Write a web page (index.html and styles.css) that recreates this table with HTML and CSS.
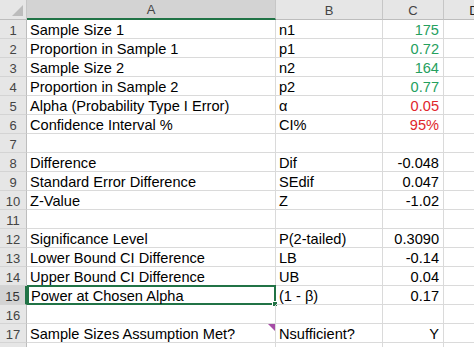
FILE: index.html
```html
<!DOCTYPE html>
<html>
<head>
<meta charset="utf-8">
<link rel="stylesheet" href="styles.css">
</head>
<body>
<div class="sheet">
  <div class="hd corner"><span class="tri"></span></div>
  <div class="hd col sel-col">A</div>
  <div class="hd col">B</div>
  <div class="hd col">C</div>
  <div class="hd col last">D</div>

  <div class="hd row">1</div><div class="c">Sample Size 1</div><div class="c">n1</div><div class="c num g">175</div><div class="c"></div>
  <div class="hd row">2</div><div class="c">Proportion in Sample 1</div><div class="c">p1</div><div class="c num g">0.72</div><div class="c"></div>
  <div class="hd row">3</div><div class="c">Sample Size 2</div><div class="c">n2</div><div class="c num g">164</div><div class="c"></div>
  <div class="hd row">4</div><div class="c">Proportion in Sample 2</div><div class="c">p2</div><div class="c num g">0.77</div><div class="c"></div>
  <div class="hd row">5</div><div class="c">Alpha (Probability Type I Error)</div><div class="c">α</div><div class="c num r">0.05</div><div class="c"></div>
  <div class="hd row">6</div><div class="c">Confidence Interval %</div><div class="c">CI%</div><div class="c num r">95%</div><div class="c"></div>
  <div class="hd row">7</div><div class="c"></div><div class="c"></div><div class="c"></div><div class="c"></div>
  <div class="hd row">8</div><div class="c">Difference</div><div class="c">Dif</div><div class="c num">-0.048</div><div class="c"></div>
  <div class="hd row">9</div><div class="c">Standard Error Difference</div><div class="c">SEdif</div><div class="c num">0.047</div><div class="c"></div>
  <div class="hd row">10</div><div class="c">Z-Value</div><div class="c">Z</div><div class="c num">-1.02</div><div class="c"></div>
  <div class="hd row">11</div><div class="c"></div><div class="c"></div><div class="c"></div><div class="c"></div>
  <div class="hd row">12</div><div class="c">Significance Level</div><div class="c">P(2-tailed)</div><div class="c num">0.3090</div><div class="c"></div>
  <div class="hd row">13</div><div class="c">Lower Bound CI Difference</div><div class="c">LB</div><div class="c num">-0.14</div><div class="c"></div>
  <div class="hd row">14</div><div class="c">Upper Bound CI Difference</div><div class="c">UB</div><div class="c num">0.04</div><div class="c"></div>
  <div class="hd row sel-row">15</div><div class="c active">Power at Chosen Alpha<span class="handle"></span></div><div class="c">(1 - β)</div><div class="c num">0.17</div><div class="c"></div>
  <div class="hd row">16</div><div class="c"></div><div class="c"></div><div class="c"></div><div class="c"></div>
  <div class="hd row">17</div><div class="c note">Sample Sizes Assumption Met?<span class="flag"></span></div><div class="c">Nsufficient?</div><div class="c num">Y</div><div class="c"></div>
  <div class="hd row"></div><div class="c"></div><div class="c"></div><div class="c"></div><div class="c"></div>
</div>
</body>
</html>
```
FILE: styles.css
```css
* { box-sizing: border-box; }
html, body { margin: 0; padding: 0; background: #fff; overflow: hidden; }
body { width: 474px; height: 347px; }

.sheet {
  display: grid;
  grid-template-columns: 27px 249px 107px 61px 60px;
  grid-template-rows: 20px repeat(18, 19px);
  font-family: "Liberation Sans", Arial, sans-serif;
}

.hd {
  background: #e6e6e6;
  color: #444;
  font-size: 13px;
  display: flex;
  align-items: center;
  justify-content: center;
}
.col {
  border-right: 1px solid #c6c6c6;
  border-bottom: 1px solid #bdbdbd;
  padding-top: 1px;
}
.col.last { border-right: none; color: #222; }
.sel-col {
  background: #d3d3d3;
  border-bottom: 2px solid #217346;
}
.corner {
  position: relative;
  border-right: 1px solid #c6c6c6;
  border-bottom: 1px solid #bdbdbd;
}
.tri {
  position: absolute;
  right: 3px;
  bottom: 3px;
  width: 0;
  height: 0;
  border-left: 11px solid transparent;
  border-bottom: 11px solid #bcbcbc;
}
.row {
  border-right: 1px solid #bdbdbd;
  border-bottom: 1px solid #d4d4d4;
  font-size: 13px;
  padding-top: 2px;
}
.sel-row {
  background: #d3d3d3;
  border-right: 2px solid #217346;
  color: #333;
}

.c {
  position: relative;
  border-right: 1px solid #dadada;
  border-bottom: 1px solid #dadada;
  font-size: 14.6px;
  color: #000;
  padding: 2px 4px 0 3px;
  display: flex;
  align-items: center;
  white-space: nowrap;
}
.num { justify-content: flex-end; }
.g { color: #25a05e; }
.r { color: #e0262c; }

.active {
  border: 2px solid #217346;
  padding-left: 2px;
  margin-top: -1px;
}
.handle {
  position: absolute;
  right: -4px;
  bottom: -4px;
  width: 6px;
  height: 6px;
  background: #217346;
  border: 1px solid #fff;
}
.flag {
  position: absolute;
  right: 0;
  top: 0;
  width: 0;
  height: 0;
  border-top: 7px solid #a64ca6;
  border-left: 7px solid transparent;
}
```
